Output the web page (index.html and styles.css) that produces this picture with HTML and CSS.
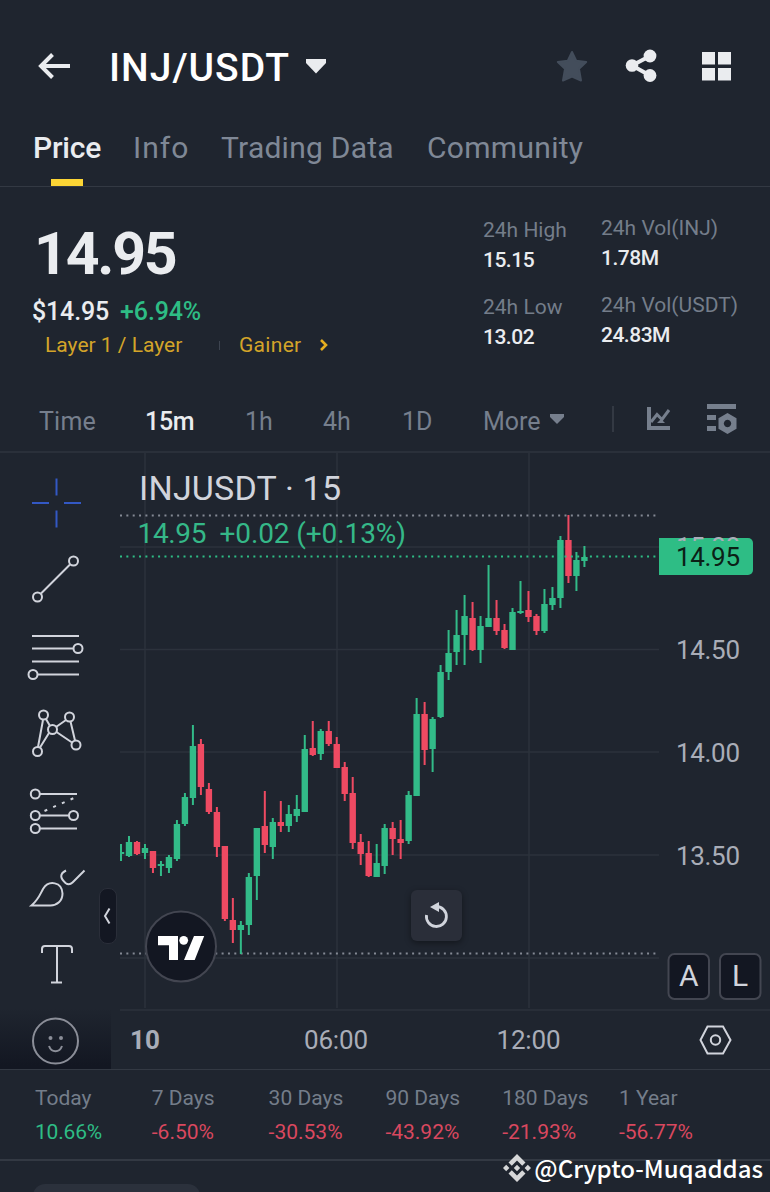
FILE: index.html
```html
<!DOCTYPE html>
<html lang="en">
<head>
    <meta charset="UTF-8">
    <meta name="viewport" content="width=device-width, initial-scale=1.0">
    <title>INJ/USDT</title>
    <link rel="stylesheet" href="styles.css">
</head>
<body>
    <header class="header">
        <svg class="back" width="34" height="28" viewBox="0 0 34 28"><path d="M33 14H4M15.500 2.500L4 14l11.500 11.500" fill="none" stroke="#eaecef" stroke-width="4"/></svg>
        <h1>INJ/USDT</h1>
        <svg class="caret" width="20" height="16" viewBox="0 0 20 16"><path d="M0 1h20v4L10 15.500 0 5z" fill="#eaecef"/></svg>
        <svg class="star" width="34" height="34" viewBox="0 0 34 34"><path d="M17 3l4.200 8.700 10 1.300-7.200 6.800 2 11.700-9-4-9 4 2-11.700L2.800 13l10-1.300z" fill="#434d5b" stroke="#434d5b" stroke-width="2" stroke-linejoin="round"/></svg>
        <svg class="share" width="32" height="34" viewBox="0 0 32 34"><path d="M25 7L7 16.500 25 26.500" fill="none" stroke="#eaecef" stroke-width="4"/><circle cx="7" cy="16.500" r="6.300" fill="#eaecef"/><circle cx="25" cy="7" r="6.400" fill="#eaecef"/><circle cx="25" cy="26.500" r="6.400" fill="#eaecef"/></svg>
        <svg class="apps" width="30" height="30" viewBox="0 0 30 30"><path d="M1 1h13v12.500H1zM17 1h13v12.500H17zM1 17h13v12.500H1zM17 17h13v12.500H17z" fill="#eaecef"/></svg>
    </header>

    <nav class="tabs">
        <a class="tab active">Price</a>
        <a class="tab info">Info</a>
        <a class="tab data">Trading Data</a>
        <a class="tab community">Community</a>
    </nav>

    <section class="summary">
        <div class="quote">
            <div class="last-price">14.95</div>
            <div class="change"><span>$14.95</span><span class="up">+6.94%</span></div>
            <div class="tags">
                <span class="layer">Layer 1 / Layer</span>
                <i></i>
                <span class="gainer">Gainer</span>
                <svg width="10" height="14" viewBox="0 0 10 14"><path d="M2 2l5 5-5 5" fill="none" stroke="#e5ae20" stroke-width="2.600"/></svg>
            </div>
        </div>
        <dl class="stats">
            <dt>24h High</dt><dd>15.15</dd>
            <dt>24h Low</dt><dd>13.02</dd>
        </dl>
        <dl class="stats volume">
            <dt>24h Vol(INJ)</dt><dd>1.78M</dd>
            <dt>24h Vol(USDT)</dt><dd>24.83M</dd>
        </dl>
    </section>

    <nav class="intervals">
        <span class="time">Time</span>
        <span class="m15 selected">15m</span>
        <span class="h1">1h</span>
        <span class="h4">4h</span>
        <span class="d1">1D</span>
        <span class="more">More</span>
        <svg class="more-caret" width="14" height="12" viewBox="0 0 14 12"><path d="M0 1h14v3L7 11 0 4z" fill="#767f8d"/></svg>
        <i></i>
        <svg class="indicator" width="24" height="26" viewBox="0 0 24 26"><path d="M0 1h4v19h19v4H0z" fill="#767f8d"/><path d="M4 16l6-7.500 5 5L22 4" fill="none" stroke="#767f8d" stroke-width="3"/><path d="M10 17l4-4 4 4z" fill="#767f8d"/></svg>
        <svg class="settings" width="30" height="32" viewBox="0 0 30 32"><path d="M0 1h29v5H0zM0 12h9v5H0zM0 23h9v5H0z" fill="#767f8d"/><path fill-rule="evenodd" d="M20.500 10l9 5.200v10.600l-9 5.200-9-5.200V15.200zM20.500 16.800a3.700 3.700 0 1 0 .01 0z" fill="#767f8d"/></svg>
    </nav>

    <main class="chart">
        <aside class="tools">
            <svg class="cross" width="111" height="77" viewBox="0 0 111 77"><path d="M56.500 14.500v17M56.500 46.500v17M32 39h17M64 39h17"/></svg>
            <svg width="111" height="77" viewBox="0 0 111 77"><circle cx="37.500" cy="56" r="4.500"/><circle cx="73.500" cy="20" r="4.500"/><path d="M41 52.500l29-29"/></svg>
            <svg width="111" height="77" viewBox="0 0 111 77"><path d="M32 18h47M32 30.500h41M32 43.500h47M38 56.500h41"/><circle cx="78" cy="30.500" r="4.500"/><circle cx="33" cy="56.500" r="4.500"/></svg>
            <svg width="111" height="77" viewBox="0 0 111 77"><path d="M43 25l-5 27M46 24l4 7M49 38L40 52.500M56 32l10-7M56.500 37L72 47.500M70.500 26.500l4.500 19"/><circle cx="43.500" cy="20" r="4.500"/><circle cx="69.500" cy="22" r="4.500"/><circle cx="52.500" cy="34.500" r="4.500"/><circle cx="37.500" cy="56.500" r="4.500"/><circle cx="76" cy="50" r="4.500"/></svg>
            <svg width="111" height="77" viewBox="0 0 111 77"><path d="M40 22h37M40 43.500h29M40 56.500h37"/><path d="M44.500 39L75 25.500" stroke-dasharray="3 6.500"/><circle cx="35.300" cy="22" r="4.500"/><circle cx="35.300" cy="43.500" r="4.500"/><circle cx="35.300" cy="56.500" r="4.500"/><circle cx="73.500" cy="43.500" r="4.500"/></svg>
            <svg width="111" height="77" viewBox="0 0 111 77"><path d="M31.500 56.500c7-6 9-12 11.500-16.500 6-9.500 19-7 19.500 4.500 0 7.500-5.500 12-12 12zM66 21.500c-7 3.500-5.500 8-.5 12.500 2.500 2 5 1.500 7-.5L84.500 21.500"/></svg>
            <svg width="111" height="77" viewBox="0 0 111 77"><path d="M42 27v-4q0-3 3-3h24q3 0 3 3v4M57 20v36M51 56.500h11"/></svg>
            <svg class="smile" width="111" height="66" viewBox="0 0 111 66"><circle cx="55.500" cy="38" r="22.500"/><circle class="eye" cx="50.500" cy="35" r="1"/><circle class="eye" cx="61" cy="35" r="1"/><path d="M49 43c2.500 7 10.500 7 13 0"/></svg>
            <button class="collapse"><svg width="8" height="18" viewBox="0 0 8 18"><path d="M6.500 1.500L2 9l4.500 7.500"/></svg></button>
        </aside>

        <svg class="plot" width="659" height="616" viewBox="111 453 659 616">
            <defs>
                <clipPath id="plotArea"><rect x="120" y="453" width="539" height="556"/></clipPath>
                <clipPath id="aboveTag"><rect x="659" y="530" width="111" height="11"/></clipPath>
            </defs>
            <path class="grid" d="M120 547H659M120 649.500H659M120 752H659M120 855H659M120 958H659M145 453V1008M337 453V1008M529 453V1008M120 1010H770"/>
            <path class="dots" d="M120 515.500H656M120 953.500H656"/>
            <g id="candles" clip-path="url(#plotArea)"></g>
            <path class="dots last" d="M120 556.500H656"/>

            <text class="symbol" x="139" y="499.500" textLength="202">INJUSDT · 15</text>
            <text class="legend" x="137.500" y="543" textLength="69">14.95</text>
            <text class="legend" x="219.500" y="543" textLength="186.500">+0.02 (+0.13%)</text>

            <path d="M659 538h89a5 5 0 0 1 5 5v27a5 5 0 0 1-5 5h-89z" fill="#2ebd85"/>
            <text class="axis" x="676" y="555.500" textLength="64" clip-path="url(#aboveTag)">15.00</text>
            <text class="axis current" x="676" y="566" textLength="64">14.95</text>
            <text class="axis" x="676" y="659" textLength="64">14.50</text>
            <text class="axis" x="676" y="761.500" textLength="64">14.00</text>
            <text class="axis" x="676" y="864.500" textLength="64">13.50</text>
            <text class="axis bold" x="130" y="1049" textLength="30">10</text>
            <text class="axis" x="304" y="1049" textLength="64">06:00</text>
            <text class="axis" x="496.500" y="1049" textLength="64">12:00</text>

            <circle cx="181" cy="946.500" r="35" fill="#131722" stroke="#434651" stroke-width="2"/>
            <path d="M158 936h20v24h-9v-14.700h-11zM194 936h10.200l-9.500 24H184z" fill="#fff"/>
            <circle cx="183.700" cy="940.300" r="4.400" fill="#fff"/>

            <rect class="reset" x="411" y="890" width="51" height="51" rx="6"/>
            <path d="M426.500 915a10 10 0 1 0 10-8.500" fill="none" stroke="#d1d4dc" stroke-width="2.800"/>
            <path d="M430 907l9-5v10z" fill="#d1d4dc"/>

            <g class="scale">
                <rect x="668.500" y="954" width="40.500" height="45" rx="6"/>
                <rect x="720" y="954" width="40.500" height="45" rx="6"/>
                <text x="679" y="986">A</text>
                <text x="732" y="986">L</text>
            </g>
            <path class="hex" d="M707.500 1026.500h15.500l7.500 13.500-7.500 13.500h-15.500L700.500 1040z"/>
            <circle class="hex" cx="715.500" cy="1040" r="4.700"/>
        </svg>
    </main>

    <section class="history">
        <div><span>Today</span><b class="up">10.66%</b></div>
        <div><span>7 Days</span><b>-6.50%</b></div>
        <div><span>30 Days</span><b>-30.53%</b></div>
        <div><span>90 Days</span><b>-43.92%</b></div>
        <div><span>180 Days</span><b>-21.93%</b></div>
        <div><span>1 Year</span><b>-56.77%</b></div>
    </section>

    <footer class="footer">
        <div class="pill"></div>
        <div class="author">
            <svg width="28" height="28" viewBox="0 0 28 28"><path d="M14 0l8.500 8.500-3.300 3.300L14 6.600l-5.200 5.200-3.300-3.300zM14 28l-8.500-8.500 3.300-3.300 5.200 5.200 5.200-5.200 3.300 3.300zM0 14l3.200-3.200L6.400 14l-3.200 3.200zM21.600 14l3.200-3.200L28 14l-3.200 3.200zM10.800 14l3.200-3.200 3.200 3.200-3.200 3.200z" fill="#d6d7d8"/></svg>
            <span>@Crypto-Muqaddas</span>
        </div>
    </footer>

    <script src="chart.js"></script>
</body>
</html>
```
FILE: styles.css
```css
* {
    box-sizing: border-box;
}
body {
    margin: 0;
    width: 770px;
    height: 1192px;
    overflow: hidden;
    background: #1f252f;
    color: #eaecef;
    font-family: Roboto, "Liberation Sans", sans-serif;
}
svg {
    display: block;
    flex: none;
}
.up {
    color: #2ebd85;
}

/* header */
.header {
    display: flex;
    align-items: center;
    height: 120px;
    padding: 12px 38px 0 37px;
}
h1 {
    margin: 4px 0 0 38px;
    width: 183px;
    font-size: 39px;
    font-weight: 500;
    line-height: 48px;
    letter-spacing: 1px;
    color: #fff;
    white-space: nowrap;
}
.caret {
    margin-left: 14px;
}
.star {
    margin-left: 229px;
}
.share {
    margin-left: 36px;
}
.apps {
    margin-left: 44px;
}

/* tabs */
.tabs {
    display: flex;
    height: 67px;
    padding-left: 33px;
    border-bottom: 1px solid #333943;
}
.tab {
    position: relative;
    line-height: 55px;
    font-size: 30px;
    color: #7f8896;
    white-space: nowrap;
}
.tab.active {
    width: 100px;
    color: #eaecef;
    font-weight: 500;
    letter-spacing: -0.2px;
}
.tab.active::after {
    content: "";
    position: absolute;
    left: 18px;
    bottom: 0;
    width: 32px;
    height: 7px;
    background: #fcd535;
}
.tab.info {
    width: 88px;
    letter-spacing: 1px;
}
.tab.data {
    width: 206px;
    letter-spacing: 0.25px;
}
.tab.community {
    letter-spacing: 0.3px;
}

/* price summary */
.summary {
    display: flex;
    height: 200px;
}
.quote {
    width: 483px;
    padding: 37px 0 0 33px;
}
.last-price {
    padding-left: 1px;
    font-size: 59px;
    font-weight: 700;
    line-height: 60px;
    letter-spacing: -2.2px;
}
.change {
    display: flex;
    gap: 11px;
    margin-top: 13px;
    margin-left: -1px;
    font-size: 25px;
    font-weight: 500;
    line-height: 30px;
    letter-spacing: -0.15px;
}
.tags {
    display: flex;
    align-items: center;
    padding-left: 12px;
    margin-top: 4px;
    font-size: 21px;
    line-height: 28px;
    color: #d3a429;
    white-space: nowrap;
}
.tags i {
    width: 1px;
    height: 9px;
    background: #3d4450;
}
.layer {
    width: 174px;
}
.gainer {
    margin-left: 19px;
    width: 80px;
    letter-spacing: 0.3px;
}
.stats {
    width: 118px;
    margin: 0;
    padding-top: 28px;
    font-size: 21px;
    white-space: nowrap;
}
.stats.volume {
    padding-top: 26px;
}
.stats dt {
    line-height: 30px;
    color: #747d8a;
    letter-spacing: 0;
}
.stats dd {
    margin: 0 0 17px;
    line-height: 30px;
    font-weight: 500;
    letter-spacing: -0.5px;
}

/* intervals */
.intervals {
    display: flex;
    align-items: center;
    height: 66px;
    padding: 5px 0 0 39px;
    border-bottom: 2px solid #2a303a;
    font-size: 25px;
    color: #767f8d;
}
.intervals .time {
    width: 106px;
    letter-spacing: 0.2px;
}
.intervals .selected {
    width: 100px;
    color: #eaecef;
    font-weight: 500;
    letter-spacing: -0.3px;
}
.intervals .h1 {
    width: 78px;
}
.intervals .h4 {
    width: 79px;
}
.intervals .d1 {
    width: 81px;
}
.intervals .more {
    width: 67px;
}
.intervals i {
    width: 2px;
    height: 26px;
    margin: -6px 33px 0 48px;
    background: #333943;
}
.more-caret,
.indicator,
.settings {
    margin-top: -5px;
}
.settings {
    margin-left: 36px;
}

/* chart */
.chart {
    display: flex;
    height: 617px;
    border-bottom: 1px solid #333943;
}
.tools {
    position: relative;
    width: 111px;
    padding-top: 11px;
    background: linear-gradient(transparent 555px, #131722 612px);
    fill: none;
    stroke: #d1d4dc;
    stroke-width: 2;
}
.tools .cross {
    stroke: #3358c4;
}
.tools .smile {
    stroke: #8b8e98;
}
.tools .eye {
    fill: #8b8e98;
}
.collapse {
    position: absolute;
    left: 99px;
    top: 435px;
    width: 18px;
    height: 56px;
    padding: 0 0 0 3px;
    border: 1px solid #2a2e39;
    border-radius: 8px;
    background: #131722;
    z-index: 1;
}
.plot {
    font-family: Roboto, sans-serif;
}
.grid {
    fill: none;
    stroke: #2c323c;
    stroke-width: 1.5;
}
.dots {
    fill: none;
    stroke: #848994;
    stroke-width: 2;
    stroke-dasharray: 2 4.35;
}
.dots.last {
    stroke: #2ebd85;
}
.up-candle {
    fill: #32bb88;
}
.down-candle {
    fill: #ee4a62;
}
.symbol {
    font-size: 34px;
    fill: #d1d4dc;
}
.legend {
    font-size: 28px;
    fill: #35b888;
}
.axis {
    font-size: 26px;
    fill: #a9adb8;
}
.axis.current {
    fill: #0b2016;
}
.axis.bold {
    font-weight: 700;
}
.reset {
    fill: #2a2e39;
    filter: drop-shadow(0 2px 3px rgba(0, 0, 0, 0.4));
}
.scale rect {
    fill: #131722;
    stroke: #434651;
    stroke-width: 2;
}
.scale text {
    font-size: 30px;
    fill: #d1d4dc;
}
.hex {
    fill: none;
    stroke: #d1d4dc;
    stroke-width: 2;
}

/* performance */
.history {
    display: flex;
    height: 89px;
    padding: 13px 0 0 35px;
    font-size: 21px;
    white-space: nowrap;
}
.history div {
    width: 116.8px;
}
.history span,
.history b {
    display: block;
    line-height: 30px;
    font-weight: 400;
}
.history span {
    color: #747d8a;
}
.history b {
    margin-top: 4px;
    color: #d9485f;
}
.history .up {
    color: #2ebd85;
    letter-spacing: -0.2px;
}

.footer {
    display: flex;
    justify-content: space-between;
    height: 33px;
    padding: 0 7px 0 33px;
    border-top: 2px solid #333943;
}
.pill {
    width: 167px;
    height: 40px;
    margin-top: 23px;
    border-radius: 12px;
    background: #2b313c;
}
.author {
    display: flex;
    align-items: center;
    gap: 3px;
    height: 13px;
    color: #fff;
    font: 500 24px "Noto Sans CJK SC", sans-serif;
    white-space: nowrap;
}
```
FILE: chart.js
```js
// [high, body top, body bottom, low, rising]
const candles = [
    [844, 852, 854, 861, 1], [836, 842, 856, 857, 1], [841, 842, 854, 855, 0], [844, 848, 853, 859, 1],
    [851, 851, 868, 873, 0], [861, 864, 866, 876, 1], [855, 857, 868, 873, 1], [820, 824, 859, 861, 1],
    [793, 797, 824, 826, 1], [725, 746, 798, 805, 1], [739, 744, 787, 795, 0], [783, 789, 812, 814, 0],
    [807, 812, 847, 857, 0], [846, 846, 919, 921, 0], [898, 920, 930, 943, 0], [921, 925, 930, 954, 1],
    [873, 877, 925, 935, 1], [828, 828, 876, 900, 1], [791, 826, 845, 853, 0], [818, 822, 847, 859, 1],
    [801, 822, 826, 832, 0], [805, 814, 826, 832, 1], [795, 809, 816, 822, 1], [735, 749, 812, 812, 1],
    [721, 748, 755, 756, 0], [729, 731, 754, 760, 1], [721, 731, 744, 746, 0], [737, 744, 768, 768, 0],
    [762, 767, 794, 801, 0], [777, 793, 843, 849, 0], [834, 842, 854, 865, 0], [841, 853, 876, 877, 0],
    [844, 863, 877, 877, 1], [824, 828, 866, 874, 1], [822, 828, 839, 855, 0], [820, 839, 843, 859, 0],
    [791, 795, 841, 844, 1], [698, 714, 796, 796, 1], [702, 714, 750, 765, 0], [717, 719, 749, 772, 1],
    [665, 672, 717, 718, 1], [630, 653, 672, 680, 1], [610, 635, 652, 665, 1], [595, 616, 635, 665, 1],
    [602, 618, 650, 651, 0], [616, 626, 650, 663, 1], [565, 618, 627, 627, 1], [600, 618, 631, 635, 0],
    [624, 630, 648, 649, 0], [608, 612, 650, 650, 1], [581, 611, 613, 614, 1], [591, 610, 617, 622, 0],
    [614, 616, 631, 635, 0], [589, 604, 631, 633, 1], [587, 598, 605, 610, 1], [536, 540, 598, 608, 1],
    [515, 540, 576, 583, 0], [552, 560, 576, 591, 1], [546, 557, 561, 567, 1]
];

const group = document.getElementById("candles");

function addRect(x, y, width, height, name) {
    const rect = document.createElementNS("http://www.w3.org/2000/svg", "rect");
    rect.setAttribute("x", x);
    rect.setAttribute("y", y);
    rect.setAttribute("width", width);
    rect.setAttribute("height", height);
    rect.setAttribute("class", name);
    group.appendChild(rect);
}

candles.forEach(function([high, top, bottom, low, rising], i) {
    const x = 121 + i * 7.99;
    const name = rising ? "up-candle" : "down-candle";
    addRect(x - 1, high, 2, low - high, name);
    addRect(x - 3.2, top, 6.4, bottom - top, name);
});
```
